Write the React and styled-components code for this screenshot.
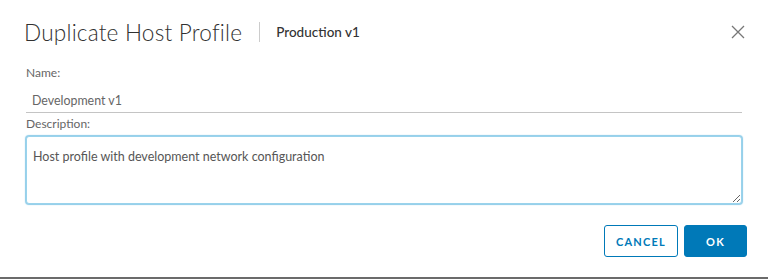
import styled, { createGlobalStyle } from 'styled-components';

const GlobalStyle = createGlobalStyle`
    html, body {
        margin: 0;
        padding: 0;
        background: #fff;
    }
    body {
        font-family: Lato, "Open Sans", sans-serif;
        color: #333;
    }
`;

const Modal = styled.div`
    box-sizing: border-box;
    width: 768px;
    height: 279px;
    background: #fff;
    border-bottom: 2px solid #6b6b6b;
    padding: 17px 26px 0 26px;
    display: flex;
    flex-direction: column;
`;

const Header = styled.div`
    display: flex;
    align-items: center;
    height: 30px;
    margin-left: -2px;
`;

const Title = styled.h2`
    margin: 0;
    font-size: 22.6px;
    font-weight: 300;
    color: #313131;
    letter-spacing: 0.2px;
`;

const Divider = styled.span`
    width: 1px;
    height: 20px;
    background: #ccc;
    margin: 0 16px 0 17px;
`;

const Subtitle = styled.span`
    font-size: 13.5px;
    font-weight: 500;
    color: #333;
`;

const CloseButton = styled.button`
    margin-left: auto;
    margin-right: -4px;
    border: 0;
    background: none;
    padding: 0;
    width: 16px;
    height: 16px;
    display: flex;
    align-items: center;
    justify-content: center;
    cursor: pointer;
`;

const Body = styled.div`
    display: flex;
    flex-direction: column;
    margin-top: 19px;
`;

const Label = styled.label`
    font-size: 12px;
    color: #666;
    line-height: 14px;
    margin-top: ${p => p.$gap || 0}px;
`;

const TextInput = styled.input`
    box-sizing: border-box;
    margin-top: 8px;
    height: 25px;
    border: 0;
    border-bottom: 1px solid #c4c4c4;
    padding: 0 6px;
    font-family: inherit;
    font-size: 12.4px;
    color: #666;
    outline: none;
`;

const TextArea = styled.textarea`
    box-sizing: border-box;
    margin-top: 5px;
    height: 68px;
    border: 1px solid #9ad3ec;
    box-shadow: 0 0 1px 1px #8ccbe8;
    border-radius: 3px;
    padding: 12px 6px;
    font-family: inherit;
    font-size: 12.5px;
    color: #565656;
    resize: vertical;
    outline: none;
    caret-color: #333;
`;

const Footer = styled.div`
    display: flex;
    justify-content: flex-end;
    gap: 6px;
    margin-top: 21px;
    margin-right: -5px;
`;

const Button = styled.button`
    box-sizing: border-box;
    height: 32px;
    padding: 0;
    width: ${p => (p.$primary ? '63px' : '74px')};
    border: 1px solid #0079b8;
    border-radius: 3px;
    background: ${p => (p.$primary ? '#0079b8' : '#fff')};
    color: ${p => (p.$primary ? '#fff' : '#0079b8')};
    font-family: inherit;
    font-size: 11px;
    font-weight: 700;
    letter-spacing: 1.2px;
    text-transform: uppercase;
    cursor: pointer;
`;

const moveCaretToEnd = e => {
    const len = e.target.value.length;
    e.target.setSelectionRange(len, len);
};

export default function App() {
    return (
        <>
            <GlobalStyle />
            <Modal>
                <Header>
                    <Title>Duplicate Host Profile</Title>
                    <Divider />
                    <Subtitle>Production v1</Subtitle>
                    <CloseButton aria-label="Close">
                        <svg width="14" height="14" viewBox="0 0 14 14">
                            <path d="M1 1 L13 13 M13 1 L1 13" stroke="#777" strokeWidth="1.3" fill="none" />
                        </svg>
                    </CloseButton>
                </Header>
                <Body>
                    <Label>Name:</Label>
                    <TextInput defaultValue="Development v1" />
                    <Label $gap={4}>Description:</Label>
                    <TextArea
                        autoFocus
                        onFocus={moveCaretToEnd}
                        defaultValue="Host profile with development network configuration"
                    />
                </Body>
                <Footer>
                    <Button>Cancel</Button>
                    <Button $primary>OK</Button>
                </Footer>
            </Modal>
        </>
    );
}
